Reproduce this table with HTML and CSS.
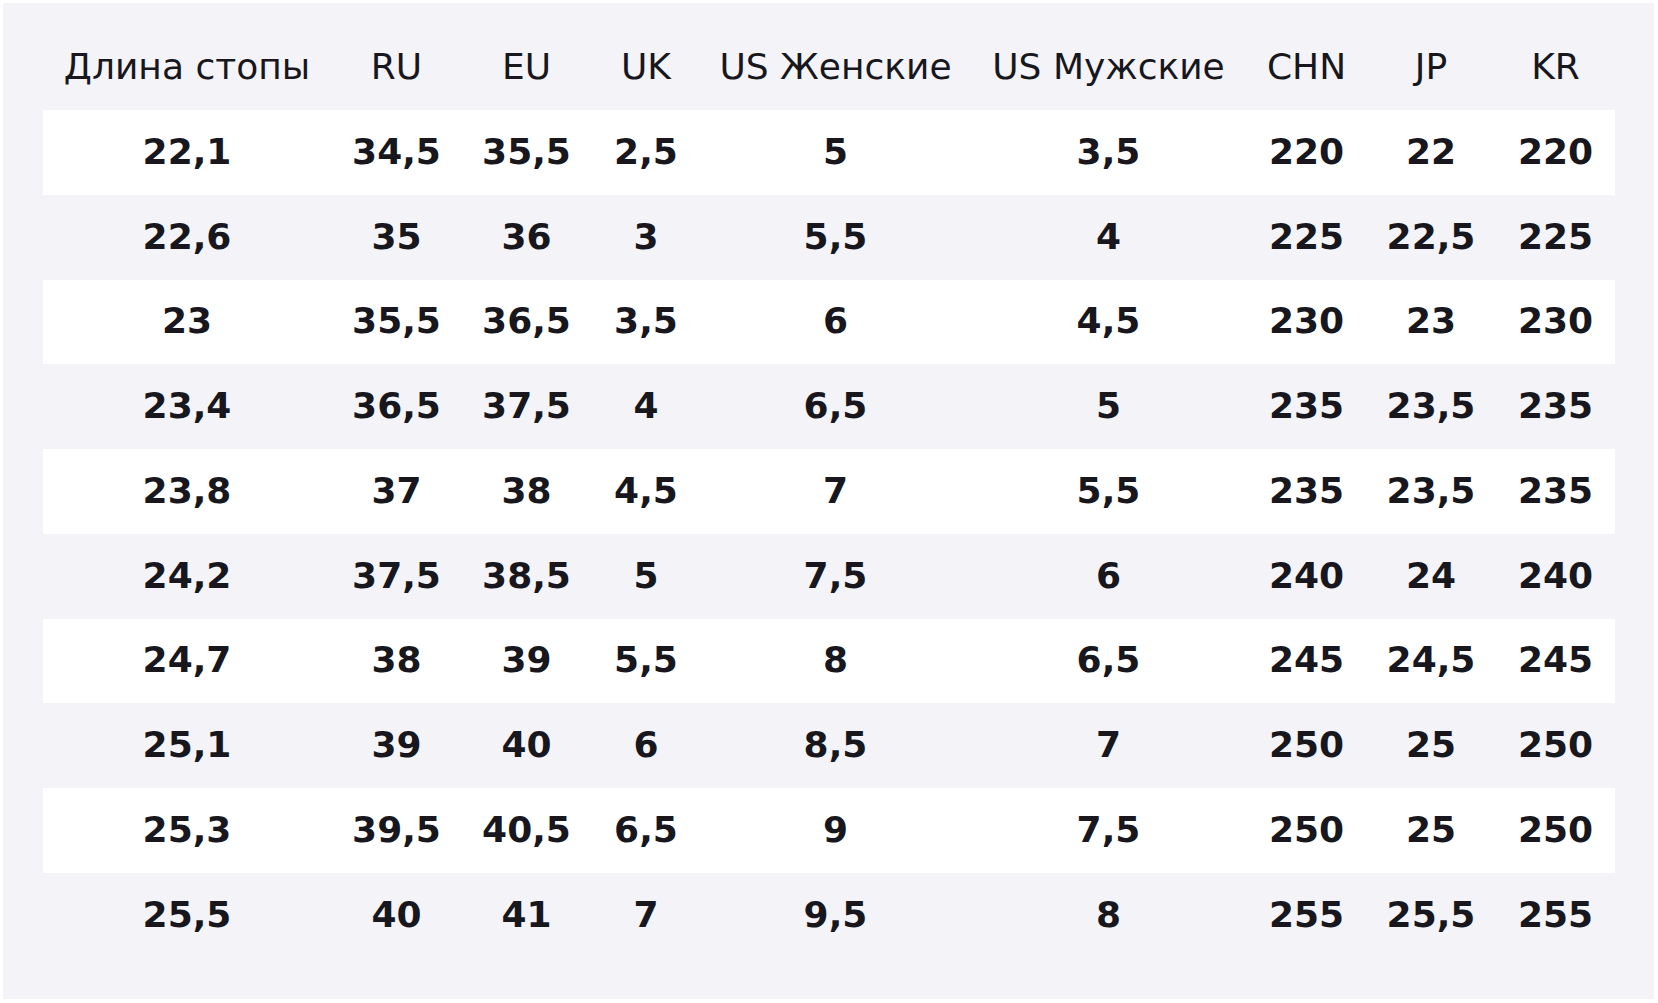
FILE: index.html
```html
<!DOCTYPE html>
<html lang="ru">
<head>
<meta charset="utf-8">
<title>Таблица размеров</title>
<link rel="stylesheet" href="styles.css">
</head>
<body>
<div class="panel">
<table class="sizes">
<colgroup>
<col class="c1"><col class="c2"><col class="c3"><col class="c4"><col class="c5"><col class="c6"><col class="c7"><col class="c8"><col class="c9">
</colgroup>
<thead>
<tr><th>Длина стопы</th><th>RU</th><th>EU</th><th>UK</th><th>US Женские</th><th>US Мужские</th><th>CHN</th><th>JP</th><th>KR</th></tr>
</thead>
<tbody>
<tr><td>22,1</td><td>34,5</td><td>35,5</td><td>2,5</td><td>5</td><td>3,5</td><td>220</td><td>22</td><td>220</td></tr>
<tr><td>22,6</td><td>35</td><td>36</td><td>3</td><td>5,5</td><td>4</td><td>225</td><td>22,5</td><td>225</td></tr>
<tr><td>23</td><td>35,5</td><td>36,5</td><td>3,5</td><td>6</td><td>4,5</td><td>230</td><td>23</td><td>230</td></tr>
<tr><td>23,4</td><td>36,5</td><td>37,5</td><td>4</td><td>6,5</td><td>5</td><td>235</td><td>23,5</td><td>235</td></tr>
<tr><td>23,8</td><td>37</td><td>38</td><td>4,5</td><td>7</td><td>5,5</td><td>235</td><td>23,5</td><td>235</td></tr>
<tr><td>24,2</td><td>37,5</td><td>38,5</td><td>5</td><td>7,5</td><td>6</td><td>240</td><td>24</td><td>240</td></tr>
<tr><td>24,7</td><td>38</td><td>39</td><td>5,5</td><td>8</td><td>6,5</td><td>245</td><td>24,5</td><td>245</td></tr>
<tr><td>25,1</td><td>39</td><td>40</td><td>6</td><td>8,5</td><td>7</td><td>250</td><td>25</td><td>250</td></tr>
<tr><td>25,3</td><td>39,5</td><td>40,5</td><td>6,5</td><td>9</td><td>7,5</td><td>250</td><td>25</td><td>250</td></tr>
<tr><td>25,5</td><td>40</td><td>41</td><td>7</td><td>9,5</td><td>8</td><td>255</td><td>25,5</td><td>255</td></tr>
</tbody>
</table>
</div>
</body>
</html>
```

FILE: styles.css
```css
html, body {
  margin: 0;
  padding: 0;
  background: #ffffff;
}
body {
  padding: 3px 4px 4px 3px;
  font-family: "DejaVu Sans", "Liberation Sans", sans-serif;
  color: #17171d;
}
.panel {
  background: #f4f4f8;
  height: 996px;
  box-sizing: border-box;
  padding: 40px 39px 0 40px;
}
.sizes {
  width: 1572px;
  table-layout: fixed;
  border-collapse: collapse;
  border-spacing: 0;
}
.c1 { width: 288px; }
.c2 { width: 131px; }
.c3 { width: 129px; }
.c4 { width: 110px; }
.c5 { width: 269px; }
.c6 { width: 277px; }
.c7 { width: 119px; }
.c8 { width: 130px; }
.c9 { width: 119px; }
.sizes th {
  font-weight: normal;
  font-size: 36px;
  line-height: 43px;
  padding: 2px 0 22px;
  text-align: center;
  white-space: nowrap;
}
.sizes td {
  font-weight: bold;
  font-size: 36px;
  line-height: 43px;
  height: 84.75px;
  box-sizing: border-box;
  padding: 0 0 2px;
  text-align: center;
  vertical-align: middle;
  white-space: nowrap;
}
.sizes tbody tr:nth-child(odd) {
  background: #ffffff;
}
```
